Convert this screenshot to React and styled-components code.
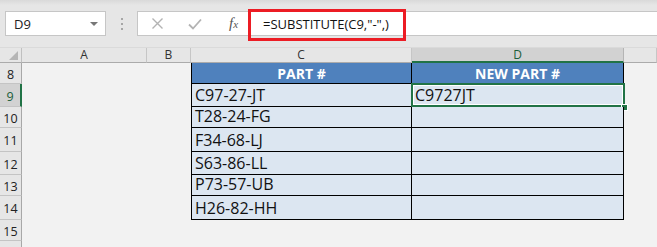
import React from "react";
import styled, { createGlobalStyle, css } from "styled-components";

const GlobalStyle = createGlobalStyle`
  html, body { margin: 0; padding: 0; }
  body { background: #e6e6e6; font-family: "Open Sans", "Noto Sans", sans-serif; }
`;

const GREEN = "#217346";

const columns = [
  { name: "A", width: 125 },
  { name: "B", width: 44 },
  { name: "C", width: 221 },
  { name: "D", width: 212, selected: true },
];

const rows = [
  { n: 8, h: 21 },
  { n: 9, h: 23 },
  { n: 10, h: 21 },
  { n: 11, h: 24 },
  { n: 12, h: 23 },
  { n: 13, h: 21 },
  { n: 14, h: 24 },
  { n: 15, h: 21 },
  { n: 16, h: 21, hidden: true },
];

const parts = ["C97-27-JT", "T28-24-FG", "F34-68-LJ", "S63-86-LL", "P73-57-UB", "H26-82-HH"];

const Page = styled.div`
  width: 657px;
  height: 247px;
  overflow: hidden;
  background: #e6e6e6;
`;

const TopBand = styled.div`
  height: 11px;
  background: linear-gradient(#d9d9d9, #e6e6e6 5px);
`;

const FormulaBar = styled.div`
  display: flex;
  height: 25px;
  padding-left: 5px;
`;

const NameBox = styled.div`
  box-sizing: border-box;
  width: 101px;
  display: flex;
  align-items: center;
  justify-content: space-between;
  padding: 0 7px 0 8px;
  background: #fff;
  border: 1px solid #c6c6c6;
  font-size: 13px;
  color: #222;
`;

const Caret = styled.span`
  width: 0;
  height: 0;
  border-left: 4px solid transparent;
  border-right: 4px solid transparent;
  border-top: 4px solid #777;
`;

const Grip = styled.div`
  width: 31px;
  display: flex;
  flex-direction: column;
  align-items: center;
  justify-content: center;
  gap: 3px;
  & > span {
    width: 2px;
    height: 2px;
    background: #a6a6a6;
  }
`;

const FormulaBox = styled.div`
  flex: 1;
  display: flex;
  box-sizing: border-box;
  background: #fff;
  border: 1px solid #c6c6c6;
  border-right: none;
`;

const IconGroup = styled.div`
  width: 110px;
  display: flex;
  align-items: center;
  padding-left: 13px;
  box-sizing: border-box;
  gap: 24px;
`;

const Fx = styled.span`
  font-family: "Liberation Serif", serif;
  font-style: italic;
  font-size: 15px;
  color: #555;
  margin-left: 3px;
  & > small {
    font-size: 11px;
  }
`;

const FormulaCell = styled.div`
  position: relative;
  flex: 1;
  display: flex;
  align-items: center;
  padding-left: 15px;
  font-size: 13px;
  color: #111;
`;

const Highlight = styled.div`
  position: absolute;
  left: 0;
  top: -3px;
  width: 158px;
  height: 32px;
  box-sizing: border-box;
  border: 3px solid #ec1c24;
`;

const Sheet = styled.div`
  margin-top: 11px;
  display: grid;
  grid-template-columns: 22px ${columns.map((c) => c.width + "px").join(" ")} 1fr;
  grid-template-rows: 15px ${rows.map((r) => r.h + "px").join(" ")};
  border-top: 1px solid #dadada;
`;

const Corner = styled.div`
  position: relative;
  box-sizing: border-box;
  background: #e6e6e6;
  border-right: 1px solid #c0c0c0;
  border-bottom: 1px solid #ababab;
  &::after {
    content: "";
    position: absolute;
    right: 3px;
    bottom: 2px;
    border-left: 9px solid transparent;
    border-bottom: 9px solid #b5b5b5;
  }
`;

const ColHead = styled.div`
  box-sizing: border-box;
  display: flex;
  align-items: center;
  justify-content: center;
  font-size: 12px;
  line-height: 1;
  color: #333;
  background: #e6e6e6;
  border-right: 1px solid #c6c6c6;
  border-bottom: 1px solid #ababab;
  ${(p) =>
    p.$selected &&
    css`
      background: #d2d2d2;
      color: #1c5e3a;
      border-bottom: 2px solid ${GREEN};
      border-right-color: #b4b4b4;
    `}
`;

const RowHead = styled.div`
  box-sizing: border-box;
  display: flex;
  align-items: center;
  justify-content: center;
  padding-top: 2px;
  font-size: 12.5px;
  color: #222;
  background: #e6e6e6;
  border-right: 1px solid #a8a8a8;
  border-bottom: 1px solid #c4c4c4;
  ${(p) =>
    p.$selected &&
    css`
      background: #d2d2d2;
      color: #1c5e3a;
      border-right: 2px solid ${GREEN};
    `}
`;

const Blank = styled.div`
  background: #f2f2f2;
`;

const Cell = styled.div`
  position: relative;
  box-sizing: border-box;
  display: flex;
  align-items: flex-end;
  padding: 0 3px;
  font-size: 16px;
  line-height: 21px;
  color: #111;
  white-space: nowrap;
  background: #dce6f1;
  border-right: 1px solid #000;
  border-bottom: 1px solid #000;
  ${(p) => p.$first && css`border-left: 1px solid #000;`}
  ${(p) =>
    p.$head &&
    css`
      justify-content: center;
      align-items: center;
      padding-top: 1px;
      background: #4f81bd;
      color: #fff;
      font-weight: 700;
      font-size: 14px;
      line-height: 1;
    `}
`;

const Selection = styled.div`
  position: absolute;
  left: -1px;
  top: -1px;
  right: -2px;
  bottom: -1px;
  border: 2px solid ${GREEN};
  box-shadow: inset 0 0 0 1px #fff;
  pointer-events: none;
`;

const FillHandle = styled.div`
  position: absolute;
  right: -5px;
  bottom: -5px;
  width: 5px;
  height: 5px;
  background: ${GREEN};
  border: 1px solid #fff;
`;

function CancelIcon() {
  return (
    <svg width="13" height="13" viewBox="0 0 13 13">
      <path d="M1.5 1.5 L11.5 11.5 M11.5 1.5 L1.5 11.5" stroke="#b3b3b3" strokeWidth="1.4" fill="none" />
    </svg>
  );
}

function CheckIcon() {
  return (
    <svg width="14" height="12" viewBox="0 0 14 12">
      <path d="M1 6.5 L5 10.5 L13 1.5" stroke="#b3b3b3" strokeWidth="1.8" fill="none" />
    </svg>
  );
}

function TableCellFor({ col, row }) {
  const isC = col === "C";
  if (row === 8) {
    return (
      <Cell $head $first={isC}>
        {isC ? "PART #" : "NEW PART #"}
      </Cell>
    );
  }
  const value = parts[row - 9];
  if (isC) return <Cell $first>{value}</Cell>;
  if (row === 9) {
    return (
      <Cell>
        C9727JT
        <Selection />
        <FillHandle />
      </Cell>
    );
  }
  return <Cell />;
}

export default function App() {
  return (
    <Page>
      <GlobalStyle />
      <TopBand />
      <FormulaBar>
        <NameBox>
          D9
          <Caret />
        </NameBox>
        <Grip>
          <span />
          <span />
          <span />
        </Grip>
        <FormulaBox>
          <IconGroup>
            <CancelIcon />
            <CheckIcon />
            <Fx>
              f<small>x</small>
            </Fx>
          </IconGroup>
          <FormulaCell>
            =SUBSTITUTE(C9,"-",)
            <Highlight />
          </FormulaCell>
        </FormulaBox>
      </FormulaBar>
      <Sheet>
        <Corner />
        {columns.map((c) => (
          <ColHead key={c.name} $selected={c.selected}>
            {c.name}
          </ColHead>
        ))}
        <ColHead />
        {rows.map((r) => (
          <React.Fragment key={r.n}>
            <RowHead $selected={r.n === 9}>{r.hidden ? null : r.n}</RowHead>
            <Blank />
            <Blank />
            {r.n <= 14 ? (
              <>
                <TableCellFor col="C" row={r.n} />
                <TableCellFor col="D" row={r.n} />
              </>
            ) : (
              <>
                <Blank />
                <Blank />
              </>
            )}
            <Blank />
          </React.Fragment>
        ))}
      </Sheet>
    </Page>
  );
}
